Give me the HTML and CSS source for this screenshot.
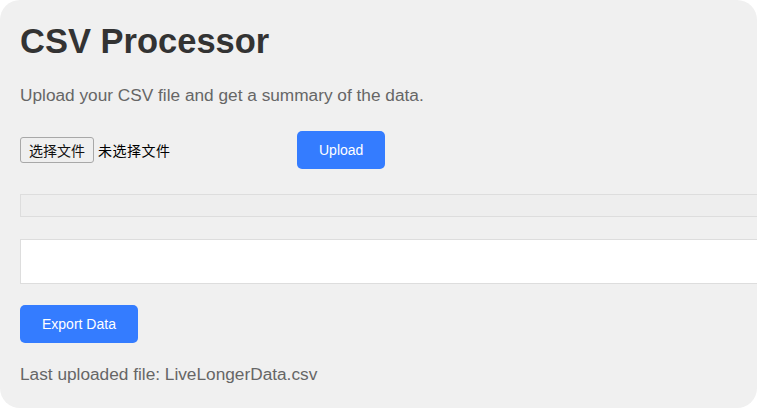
FILE: index.html
```html
<!DOCTYPE html>
<html lang="zh">
<head>
<meta charset="utf-8">
<title>CSV Processor</title>
<link rel="stylesheet" href="styles.css">
</head>
<body>
<div class="app">
  <h1 class="title">CSV Processor</h1>
  <p class="intro">Upload your CSV file and get a summary of the data.</p>
  <div class="upload-row">
    <label class="file-picker">
      <span class="file-btn">选择文件</span>
      <span class="file-name">未选择文件</span>
    </label>
    <button class="btn">Upload</button>
  </div>
  <div class="progress"></div>
  <div class="results"></div>
  <button class="btn">Export Data</button>
  <p class="last-file">Last uploaded file: LiveLongerData.csv</p>
</div>
</body>
</html>
```
FILE: styles.css
```css
html, body {
  margin: 0;
  padding: 0;
  background: #ffffff;
}

.app {
  box-sizing: border-box;
  width: 757px;
  height: 408px;
  padding: 23px 20px 0 20px;
  background: #f0f0f0;
  border-radius: 20px;
  overflow: hidden;
  font-family: "Liberation Sans", Arial, sans-serif;
}

.title {
  margin: 0;
  font-size: 34.5px;
  line-height: 36px;
  font-weight: bold;
  color: #333333;
}

.intro {
  margin: 27px 0 0 0;
  font-size: 17.25px;
  line-height: 18px;
  color: #666666;
}

.upload-row {
  display: flex;
  align-items: center;
  margin-top: 27px;
  height: 38px;
}

.file-picker {
  display: flex;
  align-items: center;
  width: 277px;
  font-family: "Noto Sans CJK SC", "Liberation Sans", sans-serif;
  font-size: 14px;
  color: #000000;
}

.file-btn {
  box-sizing: border-box;
  height: 26px;
  width: 74px;
  padding: 2px 0;
  line-height: 20px;
  text-align: center;
  background: #efefef;
  border: 1px solid #a8a8a8;
  border-radius: 3px;
  color: #111111;
}

.file-name {
  margin-left: 4px;
  line-height: 20px;
  letter-spacing: 0.5px;
}

.btn {
  box-sizing: border-box;
  height: 38px;
  padding: 0 22px;
  border: none;
  border-radius: 5px;
  background: #347cff;
  color: #ffffff;
  font-family: "Liberation Sans", Arial, sans-serif;
  font-size: 14px;
}

.progress {
  box-sizing: border-box;
  width: 760px;
  height: 23px;
  margin-top: 25px;
  background: #eeeeee;
  border: 1px solid #dddddd;
}

.results {
  box-sizing: border-box;
  width: 760px;
  height: 45px;
  margin-top: 22px;
  margin-bottom: 21px;
  background: #ffffff;
  border: 1px solid #dddddd;
}

.last-file {
  margin: 22px 0 0 0;
  font-size: 17.25px;
  line-height: 18px;
  color: #666666;
}
```
